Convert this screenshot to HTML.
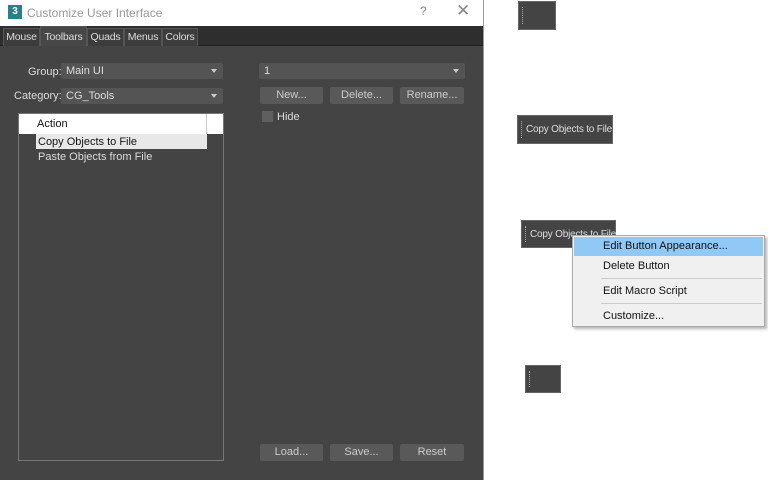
<!DOCTYPE html>
<html><head><style>
*{margin:0;padding:0;box-sizing:border-box}
body{width:768px;height:480px;background:#fff;position:relative;overflow:hidden;font-family:"Liberation Sans",sans-serif;font-size:11px;white-space:nowrap}
.a{position:absolute}
.win{left:0;top:0;width:484px;height:480px;background:#444;border-right:1px solid #9a9a9a}
.title{left:0;top:0;width:483px;height:26px;background:#fff;color:#999;font-size:12px}
.tabs{left:0;top:26px;width:483px;height:20px;background:#2e2e2e;border-bottom:1px solid #222}
.tab{position:absolute;top:2px;height:18px;background:#3c3c3c;color:#ddd;text-align:center;line-height:17px;border:1px solid #555;border-bottom:none;font-size:10.5px;letter-spacing:-0.2px}
.tab.s{background:#474747;top:0;height:20px;line-height:20px}
.cb{background:#545454;color:#ddd;height:16px;line-height:16px;padding-left:5px;border-radius:2px}
.cb:after{content:"";position:absolute;right:6px;top:6px;border:3px solid transparent;border-top:4px solid #ccc}
.btn{background:#595959;color:#ccc;height:17px;line-height:17px;text-align:center;border-radius:2px}
.lbl{color:#ddd}
.dk{background:#444;border:1px solid #666}
.grip{position:absolute;left:3px;top:5px;bottom:5px;width:1px;border-left:1px dotted #aaa}
.sm{font-size:10px;letter-spacing:-0.2px}
</style></head><body>
<div class="a win"></div>
<div class="a title"><div class="a" style="left:8px;top:5px;width:14px;height:14px;background:#2a7f8a;color:#fff;font-size:10px;font-weight:bold;text-align:center;line-height:14px">3</div><div class="a" style="left:27px;top:6px">Customize User Interface</div><div class="a" style="left:420px;top:4px;color:#888">?</div><div class="a" style="left:456px;top:1px;color:#888;font-size:17px">✕</div></div>
<div class="a tabs">
<div class="tab" style="left:3px;width:37px">Mouse</div>
<div class="tab s" style="left:40px;width:47px">Toolbars</div>
<div class="tab" style="left:87px;width:37px">Quads</div>
<div class="tab" style="left:124px;width:38px">Menus</div>
<div class="tab" style="left:162px;width:36px">Colors</div>
</div>
<div class="a lbl" style="left:28px;top:66px">Group:</div>
<div class="a cb" style="left:61px;top:63px;width:162px">Main UI</div>
<div class="a lbl" style="left:14px;top:90px">Category:</div>
<div class="a cb" style="left:61px;top:88px;width:162px">CG_Tools</div>
<div class="a" style="left:18px;top:113px;width:206px;height:348px;border:1px solid #777;background:#444"></div>
<div class="a" style="left:19px;top:114px;width:188px;height:20px;background:#fff;color:#111;padding:4px 0 0 18px;border-right:1px solid #ccc">Action</div>
<div class="a" style="left:207px;top:114px;width:16px;height:20px;background:#fff"></div>
<div class="a" style="left:36px;top:134px;width:171px;height:15px;background:#e8e8e8;color:#111;padding:2px 0 0 2px">Copy Objects to File</div>
<div class="a lbl" style="left:38px;top:151px">Paste Objects from File</div>
<div class="a cb" style="left:259px;top:63px;width:206px">1</div>
<div class="a btn" style="left:260px;top:87px;width:63px">New...</div>
<div class="a btn" style="left:330px;top:87px;width:63px">Delete...</div>
<div class="a btn" style="left:400px;top:87px;width:64px">Rename...</div>
<div class="a" style="left:262px;top:111px;width:11px;height:11px;background:#5f5f5f"></div>
<div class="a lbl" style="left:277px;top:111px">Hide</div>
<div class="a btn" style="left:260px;top:444px;width:63px">Load...</div>
<div class="a btn" style="left:330px;top:444px;width:63px">Save...</div>
<div class="a btn" style="left:400px;top:444px;width:64px">Reset</div>

<div class="a dk" style="left:518px;top:1px;width:38px;height:29px"><div class="grip"></div></div>
<div class="a dk sm" style="left:517px;top:115px;width:96px;height:29px;color:#ddd;padding:8px 0 0 8px"><div class="grip"></div>Copy Objects to File</div>
<div class="a dk sm" style="left:521px;top:220px;width:95px;height:28px;color:#ddd;padding:8px 0 0 8px"><div class="grip"></div>Copy Objects to File</div>
<div class="a dk" style="left:525px;top:365px;width:36px;height:28px"><div class="grip"></div></div>

<div class="a" style="left:572px;top:235px;width:193px;height:92px;background:#f0f0f0;border:1px solid #aaa;box-shadow:2px 2px 3px rgba(0,0,0,.3);color:#111">
<div class="a" style="left:1px;top:1px;width:189px;height:19px;background:#90c8f6"></div>
<div class="a" style="left:30px;top:4px">Edit Button Appearance...</div>
<div class="a" style="left:30px;top:24px">Delete Button</div>
<div class="a" style="left:28px;top:42px;width:161px;height:1px;background:#ccc"></div>
<div class="a" style="left:30px;top:49px">Edit Macro Script</div>
<div class="a" style="left:28px;top:67px;width:161px;height:1px;background:#ccc"></div>
<div class="a" style="left:30px;top:74px">Customize...</div>
</div>
</body></html>
